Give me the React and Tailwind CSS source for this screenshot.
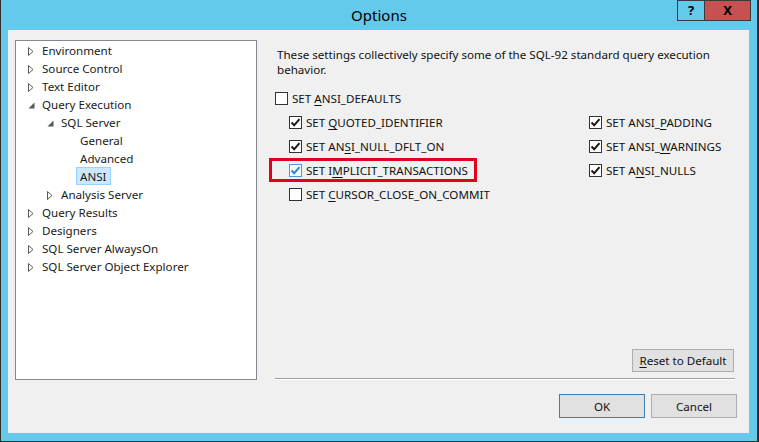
const FONT = { fontFamily: '"Segoe UI", "Noto Sans", "Liberation Sans", sans-serif' };

const tree = [
  { label: 'Environment', level: 0, arrow: 'closed' },
  { label: 'Source Control', level: 0, arrow: 'closed' },
  { label: 'Text Editor', level: 0, arrow: 'closed' },
  { label: 'Query Execution', level: 0, arrow: 'open' },
  { label: 'SQL Server', level: 1, arrow: 'open' },
  { label: 'General', level: 2 },
  { label: 'Advanced', level: 2 },
  { label: 'ANSI', level: 2, selected: true },
  { label: 'Analysis Server', level: 1, arrow: 'closed' },
  { label: 'Query Results', level: 0, arrow: 'closed' },
  { label: 'Designers', level: 0, arrow: 'closed' },
  { label: 'SQL Server AlwaysOn', level: 0, arrow: 'closed' },
  { label: 'SQL Server Object Explorer', level: 0, arrow: 'closed' },
];

const Arrow = ({ type }) => {
  if (type === 'open') {
    return (
      <svg width="7" height="7" viewBox="0 0 7 7" className="mt-[3px]">
        <path d="M6.5 0.5 L6.5 6.5 L0.5 6.5 Z" fill="#595959" />
      </svg>
    );
  }
  return (
    <svg width="6" height="9" viewBox="0 0 6 9" className="mt-[2px]">
      <path d="M0.5 0.5 L5 4.5 L0.5 8.5 Z" fill="none" stroke="#5a5a5a" strokeWidth="1" />
    </svg>
  );
};

const TreeRow = ({ item }) => {
  const textLeft = 26 + item.level * 19;
  return (
    <div className="flex h-[18px] items-center relative" style={{ paddingLeft: textLeft - 14 }}>
      <div className="w-[14px] h-[18px] flex items-center">
        {item.arrow && <Arrow type={item.arrow} />}
      </div>
      {item.selected ? (
        <span className="-ml-[4px] h-[18px] px-[3px] flex items-center border border-[#99d1ff] bg-[#cce8ff] text-[#1a1a1a]">
          {item.label}
        </span>
      ) : (
        <span className="text-[#1a1a1a]">{item.label}</span>
      )}
    </div>
  );
};

const CheckBox = ({ checked, focus }) => (
  <span
    className={`w-[13px] h-[13px] border flex items-center justify-center shrink-0 ${
      focus ? 'border-[#4f9ad6] bg-[#f4f9fe]' : 'border-[#333333] bg-white'
    }`}
  >
    {checked && (
      <svg width="11" height="11" viewBox="0 0 11 11">
        <path
          d="M1.5 5.5 L4.2 8.2 L9.5 2.2"
          fill="none"
          stroke={focus ? '#2b86d6' : '#1a1a1a'}
          strokeWidth="2"
        />
      </svg>
    )}
  </span>
);

const Label = ({ pre, key1, post }) => (
  <span className="text-[#111]">
    {pre}
    <span className="underline underline-offset-2">{key1}</span>
    {post}
  </span>
);

const Option = ({ checked, focus, pre, k, post, highlight }) => (
  <div className="relative h-[24px] flex items-center gap-[4px]">
    {highlight && (
      <div className="absolute -left-[20px] top-0 w-[208px] h-[24px] border-[3px] border-[#e3001b]" />
    )}
    <CheckBox checked={checked} focus={focus} />
    <Label pre={pre} key1={k} post={post} />
  </div>
);

export default function App() {
  return (
    <div
      className="w-[759px] h-[442px] bg-[#65c9eb] border-l border-r-2 border-b border-[#2d2d30] flex flex-col text-[11.6px] leading-[15px]"
      style={FONT}
    >
      <div className="h-[30px] relative flex justify-center items-center">
        <span className="text-[15px] text-black pt-[1px]">Options</span>
        <div className="absolute right-[6px] top-0 flex">
          <div className="w-[28px] h-[21px] border border-[#3a3a3a] flex items-center justify-center text-[13px] font-bold text-black">
            ?
          </div>
          <div className="w-[46px] h-[21px] border border-l-0 border-[#3a3a3a] bg-[#c75050] flex items-center justify-center text-[13px] font-bold text-black">
            X
          </div>
        </div>
      </div>

      <div className="ml-[7px] w-[741px] h-[403px] bg-[#f0f0f0] flex flex-col pt-[10px] pl-[7px]">
        <div className="flex h-[340px]">
          <div className="w-[242px] h-[340px] border border-[#828790] bg-white">
            {tree.map((item) => (
              <TreeRow key={item.label} item={item} />
            ))}
          </div>

          <div className="ml-[18px] w-[460px] flex flex-col">
            <p className="pt-[7px] pl-[2px] text-[#111]">
              These settings collectively specify some of the SQL-92 standard query execution behavior.
            </p>
            <div className="mt-[9px]">
              <Option pre="SET " k="A" post="NSI_DEFAULTS" />
            </div>
            <div className="flex">
              <div className="ml-[14px] w-[300px] flex flex-col">
                <Option checked pre="SET " k="Q" post="UOTED_IDENTIFIER" />
                <Option checked pre="SET AN" k="S" post="I_NULL_DFLT_ON" />
                <Option checked focus highlight pre="SET I" k="M" post="PLICIT_TRANSACTIONS" />
                <Option pre="SET " k="C" post="URSOR_CLOSE_ON_COMMIT" />
              </div>
              <div className="flex flex-col">
                <Option checked pre="SET ANSI_" k="P" post="ADDING" />
                <Option checked pre="SET ANSI_" k="W" post="ARNINGS" />
                <Option checked pre="SET A" k="N" post="SI_NULLS" />
              </div>
            </div>

            <div className="mt-auto flex justify-end pr-[1px]">
              <button className="w-[102px] h-[23px] border border-[#adadad] bg-[#e1e1e1] text-[#111]">
                <span className="underline underline-offset-2">R</span>eset to Default
              </button>
            </div>
            <div className="mt-[6px] border-t border-[#a0a0a0] border-b border-b-white h-[2px]" />
          </div>
        </div>

        <div className="mt-[14px] flex justify-end gap-[6px] pr-[12px]">
          <button className="w-[86px] h-[24px] border border-[#3c7fb1] bg-[#e1e1e1] text-[#111]">OK</button>
          <button className="w-[86px] h-[24px] border border-[#adadad] bg-[#e1e1e1] text-[#111]">Cancel</button>
        </div>
      </div>
    </div>
  );
}
